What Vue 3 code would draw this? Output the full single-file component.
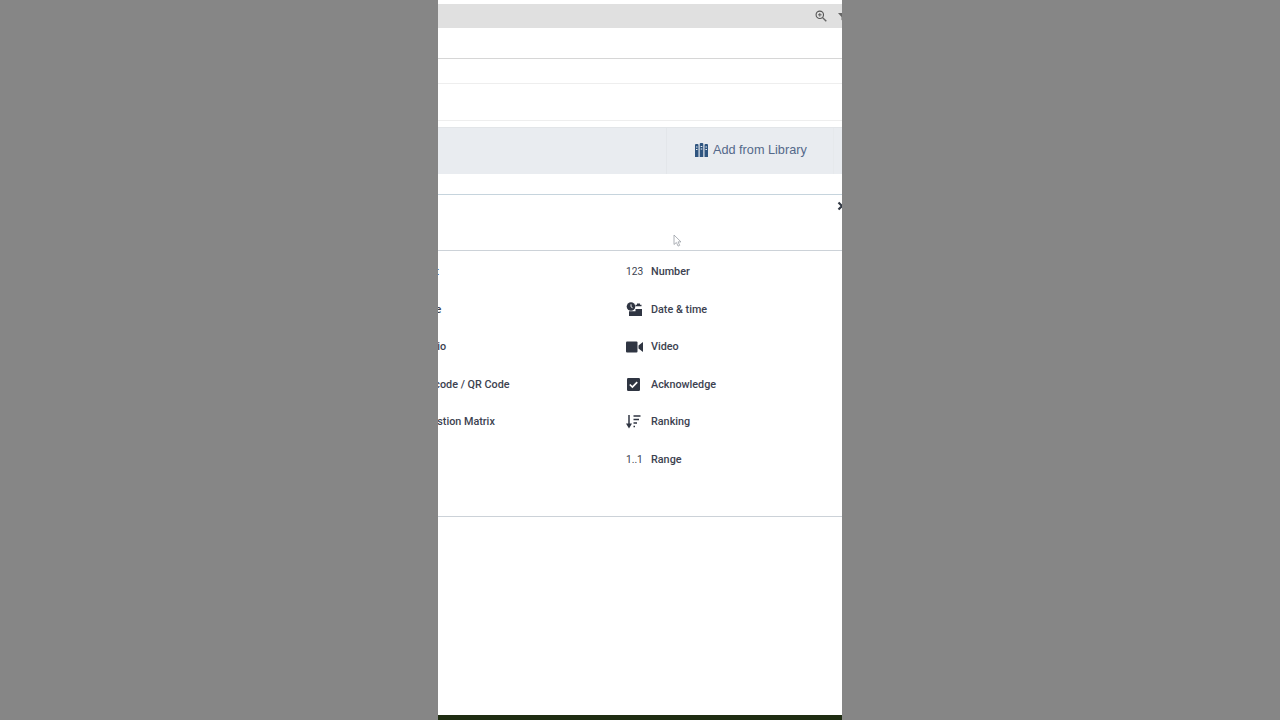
<script setup>
const leftItems = ['Text', 'Note', 'Audio', 'Barcode / QR Code', 'Question Matrix']

const rightItems = [
  { label: 'Number', glyph: '123' },
  { label: 'Date & time', icon: 'date' },
  { label: 'Video', icon: 'video' },
  { label: 'Acknowledge', icon: 'check' },
  { label: 'Ranking', icon: 'rank' },
  { label: 'Range', glyph: '1..1' }
]

const rows = rightItems.map((item, i) => ({ left: leftItems[i] || '', right: item }))
</script>

<template>
  <div class="page">
    <main class="phone">
      <div class="top-gap"></div>
      <div class="toolbar">
        <svg class="zoom-icon" viewBox="0 0 12 12" width="12" height="12">
          <circle cx="4.8" cy="4.8" r="3.7" fill="none" stroke="#555" stroke-width="1.1" />
          <path d="M3 4.8h3.6M4.8 3v3.6" stroke="#555" stroke-width="0.9" />
          <path d="M7.700 7.700l3.600 3.600" stroke="#666" stroke-width="1.400" />
        </svg>
        <svg class="filter-icon" viewBox="0 0 10 10" width="10" height="10">
          <path d="M0 1h9L5.800 5v4L3.500 8V5z" fill="#666" />
        </svg>
      </div>
      <div class="blank blank-a"></div>
      <div class="blank blank-b"></div>
      <div class="blank blank-c"></div>
      <div class="blank blank-d"></div>
      <div class="library-bar">
        <button class="library-btn" type="button">
          <svg viewBox="0 0 13 14" width="13" height="14">
            <path d="M0 2q0-1 1-1h1.500q1 0 1 1v12H0zM4.700 1q0-1 1-1h1.600q1 0 1 1v13H4.700zM9.500 2q0-1 1-1h1.500q1 0 1 1v12H9.500z" fill="#2f5580" />
            <path d="M1 4h1.500M1 6.500h1.500M5.700 3.500h1.600M5.700 6h1.600M10.500 4H12M10.500 6.500H12" stroke="#e9ecf0" stroke-width="1" />
          </svg>
          <span>Add from Library</span>
        </button>
      </div>
      <div class="blank blank-e"></div>
      <div class="dialog-head">
        <svg class="close-icon" viewBox="0 0 10 10" width="10" height="10">
          <path d="M1.500 1.500l7 7M8.500 1.500l-7 7" stroke="#333a45" stroke-width="2.200" />
        </svg>
        <svg class="cursor" viewBox="0 0 10 13" width="10" height="13">
          <path d="M1 1v9.500l2.400-2 1.700 3.600 1.600-.8-1.700-3.400h3z" fill="#fff" stroke="#9aa0a6" stroke-width="0.800" />
        </svg>
      </div>
      <div class="type-grid">
        <template v-for="row in rows" :key="row.right.label">
          <div class="type-item">
            <span class="type-icon"></span>
            <span class="type-label">{{ row.left }}</span>
          </div>
          <div class="type-item">
            <span class="type-icon">
              <span v-if="row.right.glyph" class="glyph">{{ row.right.glyph }}</span>
              <svg v-else-if="row.right.icon === 'date'" viewBox="0 0 16 14" width="16" height="14">
                <circle cx="5" cy="4.500" r="4.300" fill="#2f3542" />
                <path d="M5 2.300v2.500l1.600 1" stroke="#fff" stroke-width="0.900" fill="none" />
                <path d="M3 14V9.300h6.500V7H16v7z" fill="#2f3542" />
                <path d="M11 1.500h3v1.200h1.500v1.500h-6V2.700H11z" fill="#2f3542" />
              </svg>
              <svg v-else-if="row.right.icon === 'video'" viewBox="0 0 17 12" width="17" height="12">
                <rect x="0" y="0.500" width="11.500" height="11" rx="1" fill="#2f3542" />
                <path d="M12.500 4.500L17 1v10l-4.500-3.500z" fill="#2f3542" />
              </svg>
              <svg v-else-if="row.right.icon === 'check'" class="check-icon" viewBox="0 0 13 13" width="13" height="13">
                <rect width="13" height="13" rx="1.200" fill="#2f3542" />
                <path d="M2.800 6.500l2.600 2.600 4.800-5" stroke="#fff" stroke-width="1.700" fill="none" />
              </svg>
              <svg v-else viewBox="0 0 15 14" width="15" height="14">
                <path d="M3 0v11" stroke="#2f3542" stroke-width="1.500" />
                <path d="M0 8.500h6l-3 5z" fill="#2f3542" />
                <path d="M7.500 1h7M7.500 4.500h5.500M7.500 8h3.500M7.500 11.500h1.500" stroke="#2f3542" stroke-width="1.400" />
              </svg>
            </span>
            <span class="type-label">{{ row.right.label }}</span>
          </div>
        </template>
      </div>
      <div class="bottom-space"></div>
      <div class="video-strip"></div>
    </main>
  </div>
</template>

<style scoped>
.page {
  display: flex;
  justify-content: center;
  height: 720px;
  background: #868686;
  font-family: Roboto, Inter, "Liberation Sans", sans-serif;
}

.phone {
  position: relative;
  display: flex;
  flex-direction: column;
  width: 404px;
  height: 720px;
  overflow: hidden;
  background: #fff;
}

.top-gap {
  height: 4px;
}

.toolbar {
  display: flex;
  align-items: center;
  justify-content: flex-end;
  gap: 11px;
  height: 24px;
  margin-right: -6px;
  background: #e0e0e0;
}

.zoom-icon {
  flex: none;
}

.filter-icon {
  flex: none;
  margin-top: 2px;
}

.blank {
  flex: none;
  background: #fff;
}

.blank-a {
  height: 30px;
  border-bottom: 1px solid #d6d6d6;
}

.blank-b {
  height: 24px;
  border-bottom: 1px solid #eeeeee;
}

.blank-c {
  height: 36px;
  border-bottom: 1px solid #eeeeee;
}

.blank-d {
  height: 6px;
}

.library-bar {
  display: flex;
  flex: none;
  justify-content: flex-end;
  height: 47px;
  padding-right: 8px;
  background: #e9ecf0;
  border-top: 1px solid #e2e5e8;
  box-sizing: border-box;
  box-shadow: 0 2px 3px #f0f1f3;
}

.library-btn {
  display: flex;
  align-items: center;
  gap: 5px;
  width: 168px;
  padding: 0 0 2px 28px;
  border: 0;
  border-left: 1px solid #e3e6ea;
  border-right: 1px solid #e6e9ec;
  background: none;
  color: #54698a;
  font-family: "Liberation Sans", Arial, sans-serif;
  font-size: 12.700px;
  box-sizing: border-box;
}

.blank-e {
  height: 20px;
}

.dialog-head {
  position: relative;
  flex: none;
  height: 57px;
  border-top: 1px solid #c6d4dd;
  border-bottom: 1px solid #ccd2d8;
  box-sizing: border-box;
}

.close-icon {
  position: absolute;
  top: 6px;
  right: -5px;
}

.cursor {
  position: absolute;
  top: 39px;
  left: 235px;
}

.type-grid {
  display: grid;
  flex: none;
  grid-template-columns: 233px 234px;
  grid-auto-rows: 37.5px;
  height: 266px;
  margin-left: -45px;
  padding-top: 2px;
  border-bottom: 1px solid #ccd2d8;
  box-sizing: border-box;
}

.type-item {
  display: flex;
  align-items: center;
  height: 37.5px;
  color: #3c4250;
  font-size: 10.800px;
  font-weight: 500;
  white-space: nowrap;
}

.type-icon {
  display: flex;
  flex: none;
  align-items: center;
  width: 25px;
}

.check-icon {
  margin-left: 1px;
}

.glyph {
  font-size: 10.200px;
  font-weight: 400;
}

.bottom-space {
  flex: 1;
}

.video-strip {
  flex: none;
  height: 5px;
  background: #1f2d12;
}
</style>

<style>
body {
  margin: 0;
}
</style>
